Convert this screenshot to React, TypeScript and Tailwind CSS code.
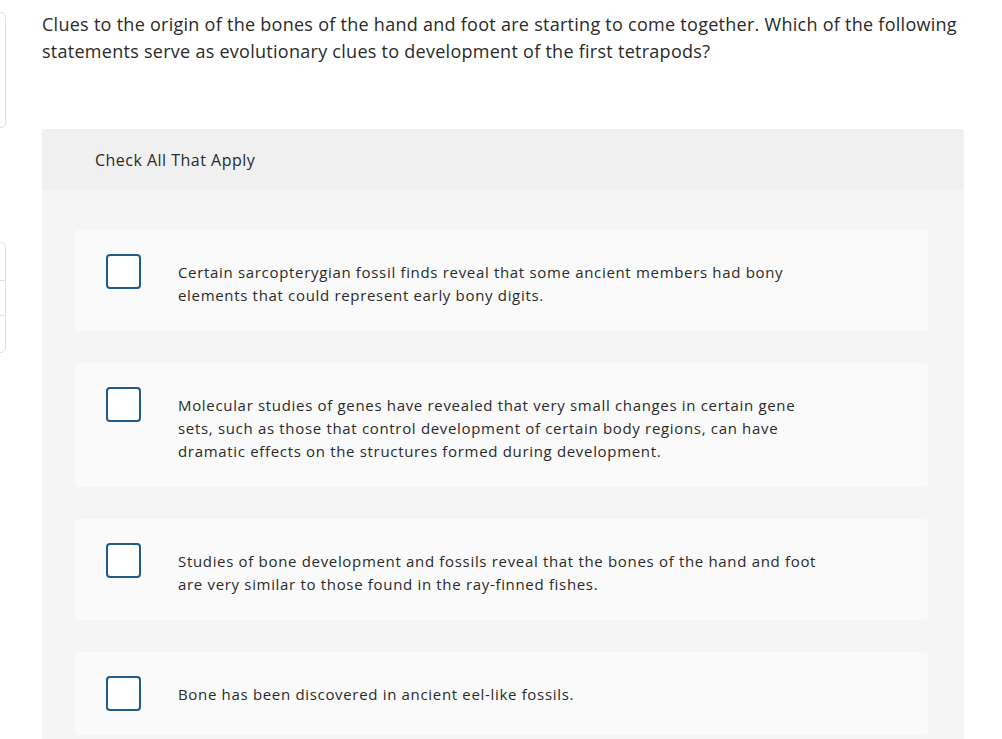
const items = [
  "Certain sarcopterygian fossil finds reveal that some ancient members had bony elements that could represent early bony digits.",
  "Molecular studies of genes have revealed that very small changes in certain gene sets, such as those that control development of certain body regions, can have dramatic effects on the structures formed during development.",
  "Studies of bone development and fossils reveal that the bones of the hand and foot are very similar to those found in the ray-finned fishes.",
  "Bone has been discovered in ancient eel-like fossils.",
];

const Choice = ({ text }: { text: string }) => (
  <label className="flex flex-row items-start rounded-[4px] bg-[#fafafa] pt-6 pb-6 pl-[31px]">
    <span className="block w-[35px] h-[35px] shrink-0 rounded-[4px] border-2 border-[#1f5a8c] bg-white" />
    <span className="ml-[37px] mt-[7px] max-w-[645px] text-[15px] leading-[23px] tracking-[0.045em] text-[#2a2a2a]">{text}</span>
  </label>
);

export default function App() {
  return (
    <div className="relative min-h-[739px] overflow-hidden bg-white font-['Open_Sans','Noto_Sans',sans-serif]">
      {/* slivers of side panels cut off at the left edge */}
      <div className="absolute left-[-20px] top-[12px] h-[116px] w-[26px] rounded-[5px] border border-[#e2e2e2] bg-white" />
      <div className="absolute left-[-20px] top-[242px] flex h-[111px] w-[26px] flex-col rounded-[5px] border border-[#e2e2e2] bg-white">
        <div className="h-[38px] border-b border-[#e2e2e2]" />
        <div className="h-[35px] border-b border-[#e2e2e2]" />
      </div>

      <div className="pl-[42px] pr-[38px]">
        <p className="pt-[11px] text-[18px] leading-[27px] tracking-[0.015em] text-[#2a2a2a]">
          Clues to the origin of the bones of the hand and foot are starting to come together. Which of the following statements serve as evolutionary clues to development of the first tetrapods?
        </p>

        <div className="mt-[64px] rounded-t-[4px] bg-[#f5f5f5]">
          <div className="flex h-[61px] items-center rounded-t-[4px] bg-[#f0f0f0] pl-[53px] text-[16px] tracking-[0.03em] text-[#2a2a2a]">
            Check All That Apply
          </div>
          <div className="flex flex-col gap-8 pt-10 pl-[33px] pr-[36px] pb-8">
            {items.map((t, i) => (
              <Choice key={i} text={t} />
            ))}
          </div>
        </div>
      </div>
    </div>
  );
}
